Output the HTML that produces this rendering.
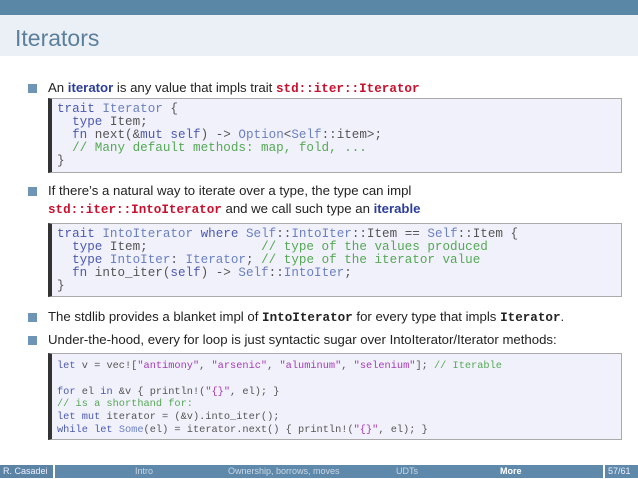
<!DOCTYPE html>
<html><head><meta charset="utf-8"><style>
*{margin:0;padding:0;box-sizing:border-box}
body{width:638px;height:479px;overflow:hidden;background:#fff;font-family:"Liberation Sans",Arial,sans-serif;color:#222;position:relative}
.top{position:absolute;left:0;top:0;width:638px;height:15px;background:#5b87a7}
.band{position:absolute;left:0;top:15px;width:638px;height:41px;background:#eaf0f5}
.title{position:absolute;left:15px;top:25px;font-size:23px;color:#5c7f9c}
.b{position:absolute;left:48px;font-size:13.2px;white-space:nowrap;line-height:15px}
.b.bl:before{content:"";position:absolute;left:-20px;top:4px;width:9px;height:9px;background:#6e95b5}
.kw{color:#2c3e9a;font-weight:bold}
.rc{font-family:"Liberation Mono",monospace;font-weight:bold;color:#c8102e;font-size:12.6px}
.bc{font-family:"Liberation Mono",monospace;font-weight:bold;color:#222;font-size:12.6px}
.code{position:absolute;left:48px;width:574px;background:#f1f1fb;border:1px solid #aaa;border-left:4px solid #333;font-family:"Liberation Mono",monospace;white-space:pre;color:#555;padding-left:5px}
.c1{font-size:12.6px;line-height:13px;padding-top:4px}
.c3{font-size:10.3px;line-height:12.8px;padding-top:6px}
.k{color:#4b5ab0}.t{color:#6a80c0}.g{color:#55a855}.s{color:#a33bb5}
.foot{position:absolute;top:465px;height:13px;background:#5f89ab;color:#c9d8e4;font-size:9px;line-height:13px}
</style></head><body>
<div class="top"></div><div class="band"></div>
<div class="title">Iterators</div>
<div class="b bl" style="top:80px">An <span class="kw">iterator</span> is any value that impls trait <span class="rc">std::iter::Iterator</span></div>
<div class="code c1" style="top:98px;height:75px"><span class="k">trait</span> <span class="t">Iterator</span> {
  <span class="k">type</span> Item;
  <span class="k">fn</span> next(&amp;<span class="k">mut self</span>) -&gt; <span class="t">Option</span>&lt;<span class="t">Self</span>::item&gt;;
  <span class="g">// Many default methods: map, fold, ...</span>
}</div>
<div class="b bl" style="top:183px">If there’s a natural way to iterate over a type, the type can impl</div>
<div class="b" style="top:201px"><span class="rc">std::iter::IntoIterator</span> and we call such type an <span class="kw">iterable</span></div>
<div class="code c1" style="top:223px;height:74px"><span class="k">trait</span> <span class="t">IntoIterator</span> <span class="k">where</span> <span class="t">Self</span>::<span class="t">IntoIter</span>::Item == <span class="t">Self</span>::Item {
  <span class="k">type</span> Item;               <span class="g">// type of the values produced</span>
  <span class="k">type</span> <span class="t">IntoIter</span>: <span class="t">Iterator</span>; <span class="g">// type of the iterator value</span>
  <span class="k">fn</span> into_iter(<span class="k">self</span>) -&gt; <span class="t">Self</span>::<span class="t">IntoIter</span>;
}</div>
<div class="b bl" style="top:309px">The stdlib provides a blanket impl of <span class="bc">IntoIterator</span> for every type that impls <span class="bc">Iterator</span>.</div>
<div class="b bl" style="top:332px">Under-the-hood, every for loop is just syntactic sugar over IntoIterator/Iterator methods:</div>
<div class="code c3" style="top:353px;height:87px"><span class="k">let</span> v = vec![<span class="s">"antimony"</span>, <span class="s">"arsenic"</span>, <span class="s">"aluminum"</span>, <span class="s">"selenium"</span>]; <span class="g">// Iterable</span>

<span class="k">for</span> el <span class="k">in</span> &amp;v { println!(<span class="s">"{}"</span>, el); }
<span class="g">// is a shorthand for:</span>
<span class="k">let mut</span> iterator = (&amp;v).into_iter();
<span class="k">while let</span> <span class="t">Some</span>(el) = iterator.next() { println!(<span class="s">"{}"</span>, el); }</div>
<div class="foot" style="left:0;width:53px;padding-left:3px;background:#5a83a4;color:#eef">R. Casadei</div>
<div class="foot" style="left:55px;width:548px">
<span style="position:absolute;left:80px">Intro</span>
<span style="position:absolute;left:173px">Ownership, borrows, moves</span>
<span style="position:absolute;left:341px">UDTs</span>
<span style="position:absolute;left:445px;color:#fff;font-weight:bold">More</span></div>
<div class="foot" style="left:605px;width:33px;padding-left:3px;color:#eef">57/61</div>
</body></html>
